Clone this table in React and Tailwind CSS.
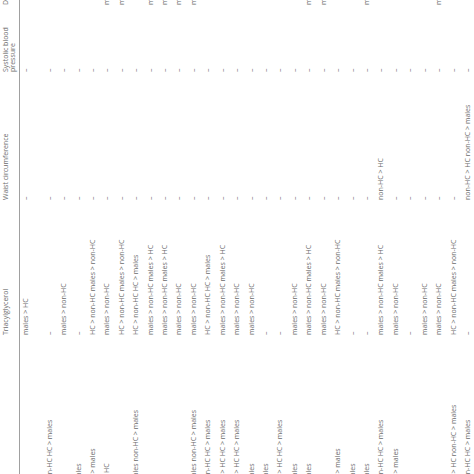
const ROWS = [
  ["–", "males > HC", "–", "–", ""],
  ["HC > non-HC HC > males", "–", "–", "–", ""],
  ["–", "males > non-HC", "–", "–", ""],
  ["HC > males", "–", "–", "–", ""],
  ["non-HC > males", "HC > non-HC males > non-HC", "–", "–", ""],
  ["males > HC", "males > non-HC", "–", "–", "males > HC"],
  ["–", "HC > non-HC males > non-HC", "–", "–", "males > HC"],
  ["HC > males non-HC > males", "HC > non-HC HC > males", "–", "–", ""],
  ["–", "males > non-HC males > HC", "–", "–", "males > HC"],
  ["–", "males > non-HC males > HC", "–", "–", "males > HC"],
  ["–", "males > non-HC", "–", "–", "males > HC"],
  ["HC > males non-HC > males", "males > non-HC", "–", "–", "males > HC"],
  ["HC > non-HC HC > males", "HC > non-HC HC > males", "–", "–", ""],
  ["non-HC > HC HC > males", "males > non-HC males > HC", "–", "–", ""],
  ["non-HC > HC HC > males", "males > non-HC", "–", "–", ""],
  ["HC > males", "males > non-HC", "–", "–", ""],
  ["HC > males", "–", "–", "–", ""],
  ["non-HC > HC HC > males", "–", "–", "–", ""],
  ["HC > males", "males > non-HC", "–", "–", ""],
  ["HC > males", "males > non-HC males > HC", "–", "–", "males > HC"],
  ["–", "males > non-HC", "–", "–", "males > HC"],
  ["non-HC > males", "HC > non-HC males > non-HC", "–", "–", ""],
  ["HC > males", "–", "–", "–", ""],
  ["HC > males", "–", "–", "–", "males > HC"],
  ["HC > non-HC HC > males", "males > non-HC males > HC", "non-HC > HC", "–", ""],
  ["non-HC > males", "males > non-HC", "–", "–", ""],
  ["–", "–", "–", "–", ""],
  ["–", "males > non-HC", "–", "–", ""],
  ["–", "males > non-HC", "–", "–", "males > HC"],
  ["non-HC > HC non-HC > males", "HC > non-HC males > non-HC", "–", "–", ""],
  ["HC > non-HC HC > males", "–", "non-HC > HC non-HC > males", "–", ""],
];

const FONT = { fontFamily: '"Open Sans", "Noto Sans", "DejaVu Sans", sans-serif' };

function Row({ cells, first }) {
  return (
    <div className={first ? "flex h-[23.3px]" : "flex h-[14.43px]"}>
      <div className="w-[165px] shrink-0 pt-[2.4px] leading-[8.6px] whitespace-nowrap">{cells[0]}</div>
      <div className="w-[135px] shrink-0 pt-[2.4px] leading-[8.6px] whitespace-nowrap">{cells[1]}</div>
      <div className="w-[128px] shrink-0 pt-[2.4px] leading-[8.6px] whitespace-nowrap">{cells[2]}</div>
      <div className="w-[67px] shrink-0 pt-[2.4px] leading-[8.6px] whitespace-nowrap">{cells[3]}</div>
      <div className="w-[120px] shrink-0 pt-[2.4px] leading-[8.6px] whitespace-nowrap">{cells[4]}</div>
    </div>
  );
}

export default function App() {
  return (
    <div className="w-[474px] h-[474px] overflow-hidden bg-white" style={FONT}>
      <div className="w-[474px] h-[474px] -rotate-90">
        <div className="ml-[-26px] w-[615px] text-[7px] text-[#6b6b6b]">
          <div className="flex h-[20px] border-b border-[#a0a0a0] leading-[7.5px] pt-[1.75px]">
            <div className="w-[165px] shrink-0"></div>
            <div className="w-[135px] shrink-0 whitespace-nowrap">Triacylglycerol</div>
            <div className="w-[128px] shrink-0 whitespace-nowrap">Waist circumference</div>
            <div className="w-[67px] shrink-0 whitespace-nowrap">
              Systolic blood
              <br />
              pressure
            </div>
            <div className="w-[120px] shrink-0 whitespace-nowrap">Diastolic blood</div>
          </div>
          {ROWS.map((r, i) => (
            <Row key={i} cells={r} first={i === 0} />
          ))}
        </div>
      </div>
    </div>
  );
}
